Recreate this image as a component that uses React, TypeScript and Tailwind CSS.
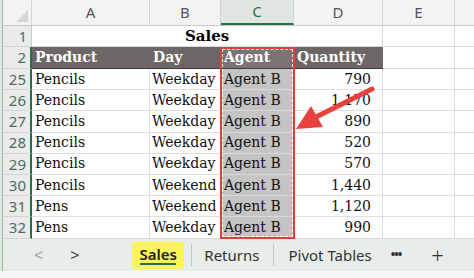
import React from "react";

const serif = { fontFamily: '"DejaVu Serif", serif' } as const;

const rows = [
  { n: 25, p: "Pencils", d: "Weekday", q: "790" },
  { n: 26, p: "Pencils", d: "Weekday", q: "1,170" },
  { n: 27, p: "Pencils", d: "Weekday", q: "890" },
  { n: 28, p: "Pencils", d: "Weekday", q: "520" },
  { n: 29, p: "Pencils", d: "Weekday", q: "570" },
  { n: 30, p: "Pencils", d: "Weekend", q: "1,440" },
  { n: 31, p: "Pens", d: "Weekend", q: "1,120" },
  { n: 32, p: "Pens", d: "Weekday", q: "990" },
];

function RowHead({ n, sel }: { n: number; sel?: boolean }) {
  return (
    <div
      className={`w-[29px] shrink-0 flex items-center justify-end pr-[4px] bg-[#ebebeb] border-b border-[#d4d4d4] text-[15px] ${
        sel ? "border-r-2 border-r-[#217346] text-[#4d6b5a]" : "border-r border-r-[#c8c8c8] text-[#666]"
      }`}
      style={{ fontFamily: '"Noto Sans", sans-serif' }}
    >
      {n}
    </div>
  );
}

export default function App() {
  return (
    <div className="w-[474px] h-[278px] overflow-hidden bg-white relative flex flex-col">
      <div className="flex flex-1">
        {/* window edge */}
        <div className="w-[3px] shrink-0 bg-[#dde8e0] border-r border-[#9fb7a6]" />
        <div className="flex-1 flex flex-col">
          {/* column letters */}
          <div
            className="h-[26px] flex bg-[#f3f3f3] border-b border-[#c9c9c9] text-[15px] text-[#555]"
            style={{ fontFamily: '"Noto Sans", sans-serif' }}
          >
            <div className="w-[29px] shrink-0 border-r border-[#d4d4d4] relative">
              <div className="absolute right-[3px] bottom-[3px] w-0 h-0 border-l-[12px] border-l-transparent border-b-[12px] border-b-[#d6d6d6]" />
            </div>
            <div className="w-[118px] shrink-0 flex items-center justify-center border-r border-[#d4d4d4]">A</div>
            <div className="w-[71px] shrink-0 flex items-center justify-center border-r border-[#d4d4d4]">B</div>
            <div className="w-[73px] shrink-0 flex items-center justify-center border-r border-[#d4d4d4] bg-[#e1e5e2] border-b-2 border-b-[#217346] text-[#217346]">C</div>
            <div className="w-[89px] shrink-0 flex items-center justify-center border-r border-[#d4d4d4]">D</div>
            <div className="w-[72px] shrink-0 flex items-center justify-center border-r border-[#d4d4d4]">E</div>
            <div className="flex-1" />
          </div>

          {/* row 1 */}
          <div className="h-[21px] flex">
            <RowHead n={1} />
            <div
              className="w-[351px] shrink-0 flex items-center justify-center font-bold text-[15px] text-black border-b border-[#dadada] border-r border-r-[#dadada]"
              style={serif}
            >
              Sales
            </div>
            <div className="w-[72px] shrink-0 border-b border-r border-[#dadada]" />
            <div className="flex-1 border-b border-[#dadada]" />
          </div>

          {/* row 2 header */}
          <div className="h-[22px] flex">
            <RowHead n={2} sel />
            <div className="w-[351px] shrink-0 flex bg-[#6c6766] text-white font-bold text-[14px] border-b border-[#3d3d3d]" style={serif}>
              <div className="w-[118px] shrink-0 flex items-center pl-[3px]">Product</div>
              <div className="w-[71px] shrink-0 flex items-center pl-[3px]">Day</div>
              <div className="w-[73px] shrink-0 flex items-center pl-[3px] bg-[#7a7574]">Agent</div>
              <div className="w-[89px] shrink-0 flex items-center pl-[3px]">Quantity</div>
            </div>
            <div className="w-[72px] shrink-0 border-b border-r border-[#dadada]" />
            <div className="flex-1 border-b border-[#dadada]" />
          </div>

          {rows.map((r) => (
            <div key={r.n} className="h-[21.2px] flex text-[14px] text-[#111]" style={serif}>
              <RowHead n={r.n} sel />
              <div className="w-[118px] shrink-0 flex items-center pl-[3px] border-b border-r border-[#dedede]">{r.p}</div>
              <div className="w-[71px] shrink-0 flex items-center pl-[2px] border-b border-r border-[#dedede] whitespace-nowrap overflow-hidden">{r.d}</div>
              <div className="w-[73px] shrink-0 flex items-center pl-[3px] bg-[#c4c4c4] border-b border-[#d9d9d9]">Agent B</div>
              <div className="w-[89px] shrink-0 flex items-center justify-end pr-[11px] border-b border-r border-[#dedede]">{r.q}</div>
              <div className="w-[72px] shrink-0 border-b border-r border-[#dedede]" />
              <div className="flex-1 border-b border-[#dedede]" />
            </div>
          ))}
        </div>
      </div>

      {/* copy marquee around column C */}
      <div className="absolute left-[220px] top-[47px] w-[75px] h-[192px] border-2 border-[#e0403c] pointer-events-none">
        <div className="w-full h-full border border-dashed border-white/80" />
      </div>

      {/* arrow */}
      <svg className="absolute left-0 top-0 pointer-events-none" width="474" height="278">
        <line x1="372" y1="89" x2="316" y2="117" stroke="#e8423f" strokeWidth="5" strokeLinecap="round" />
        <polygon points="296,129 311,106 323,127" fill="#e8423f" />
      </svg>

      {/* sheet tabs */}
      <div
        className="h-[32px] shrink-0 flex items-center bg-[#e8ede9] text-[15px] text-[#333]"
        style={{ fontFamily: '"Noto Sans", sans-serif' }}
      >
        <div className="w-[3px] self-stretch bg-[#dde8e0] border-r border-[#9fb7a6]" />
        <span className="ml-[31px] text-[#a0a0a0] text-[16px]">&lt;</span>
        <span className="ml-[27px] text-[#444] text-[16px]">&gt;</span>
        <div className="ml-[53px] h-[27px] w-[52px] flex flex-col items-center justify-center bg-[#fbf55a] rounded-[3px] font-semibold text-[#222]">
          <span className="leading-[18px]">Sales</span>
          <span className="w-[36px] h-[2px] bg-[#217346]" />
        </div>
        <div className="ml-[7px] w-px h-[22px] bg-[#c8c8c8]" />
        <span className="ml-[12px]">Returns</span>
        <div className="ml-[14px] w-px h-[22px] bg-[#c8c8c8]" />
        <span className="ml-[14px]">Pivot Tables</span>
        <span className="ml-[19px] font-bold text-[12px] tracking-[-1px]">•••</span>
        <span className="ml-[30px] text-[22px] font-light leading-none">+</span>
      </div>
      <div className="h-[7px] shrink-0 bg-[#f6f6f6]" />
    </div>
  );
}
